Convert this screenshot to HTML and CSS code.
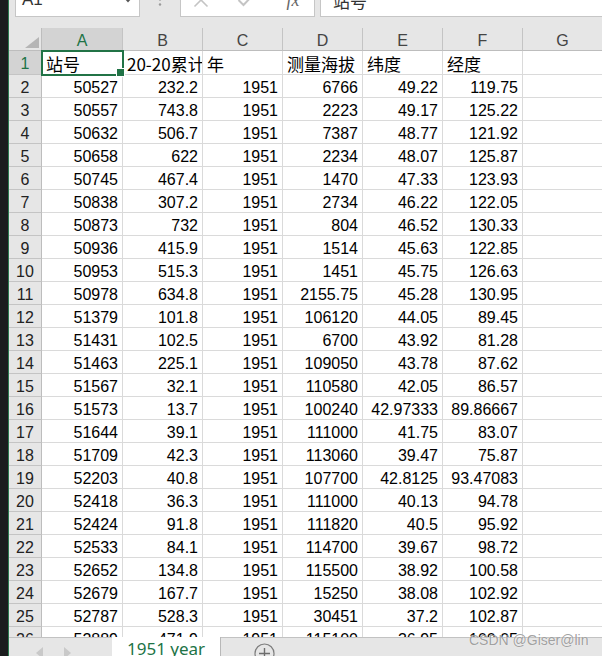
FILE: index.html
```html
<!DOCTYPE html>
<html lang="zh">
<head>
<meta charset="utf-8">
<title>Sheet</title>
<link rel="stylesheet" href="styles.css">
</head>
<body>
<div class="app">
  <div class="edge"></div>
  <div class="main">
    <div class="toolbar">
      <div class="bar">
        <div class="namebox"><span class="nametext">A1</span><svg class="ddarrow" width="8" height="5" viewBox="0 0 8 5"><polygon points="0,0 8,0 4,4.5" fill="#555"/></svg></div>
        <div class="dots"><svg width="4" height="14" viewBox="0 0 4 14"><circle cx="2" cy="1.5" r="1.2" fill="#9a9a9a"/><circle cx="2" cy="6.5" r="1.2" fill="#9a9a9a"/><circle cx="2" cy="11.5" r="1.2" fill="#9a9a9a"/></svg></div>
        <div class="fxbox">
          <div class="slot s1"><svg width="16" height="16" viewBox="0 0 16 16"><path d="M1.5 1.5 L14.5 14.5 M14.5 1.5 L1.5 14.5" stroke="#c4c4c4" stroke-width="1.6" fill="none"/></svg></div>
          <div class="slot s2"><svg width="18" height="14" viewBox="0 0 18 14"><path d="M1.5 7 L6.5 12 L16.5 1.5" stroke="#c4c4c4" stroke-width="2" fill="none"/></svg></div>
          <div class="slot s3"><span class="fx">fx</span></div>
        </div>
        <div class="formula"><span class="ftext">站号</span></div>
      </div>
    </div>

    <div class="sheet">
      <div class="corner"><svg width="14" height="11" viewBox="0 0 14 11"><polygon points="14,0 14,11 0,11" fill="#b5b5b5"/></svg></div>
      <div class="ch on">A</div><div class="ch">B</div><div class="ch">C</div><div class="ch">D</div><div class="ch">E</div><div class="ch">F</div><div class="ch g">G</div>

      <div class="rh on">1</div>
      <div class="c t cjk sel">站号</div><div class="c t cjk">20-20累计降水</div><div class="c t cjk">年</div><div class="c t cjk">测量海拔</div><div class="c t cjk">纬度</div><div class="c t cjk">经度</div><div class="c g"></div>

      <div class="rh">2</div><div class="c n">50527</div><div class="c n">232.2</div><div class="c n">1951</div><div class="c n">6766</div><div class="c n">49.22</div><div class="c n">119.75</div><div class="c g"></div>
      <div class="rh">3</div><div class="c n">50557</div><div class="c n">743.8</div><div class="c n">1951</div><div class="c n">2223</div><div class="c n">49.17</div><div class="c n">125.22</div><div class="c g"></div>
      <div class="rh">4</div><div class="c n">50632</div><div class="c n">506.7</div><div class="c n">1951</div><div class="c n">7387</div><div class="c n">48.77</div><div class="c n">121.92</div><div class="c g"></div>
      <div class="rh">5</div><div class="c n">50658</div><div class="c n">622</div><div class="c n">1951</div><div class="c n">2234</div><div class="c n">48.07</div><div class="c n">125.87</div><div class="c g"></div>
      <div class="rh">6</div><div class="c n">50745</div><div class="c n">467.4</div><div class="c n">1951</div><div class="c n">1470</div><div class="c n">47.33</div><div class="c n">123.93</div><div class="c g"></div>
      <div class="rh">7</div><div class="c n">50838</div><div class="c n">307.2</div><div class="c n">1951</div><div class="c n">2734</div><div class="c n">46.22</div><div class="c n">122.05</div><div class="c g"></div>
      <div class="rh">8</div><div class="c n">50873</div><div class="c n">732</div><div class="c n">1951</div><div class="c n">804</div><div class="c n">46.52</div><div class="c n">130.33</div><div class="c g"></div>
      <div class="rh">9</div><div class="c n">50936</div><div class="c n">415.9</div><div class="c n">1951</div><div class="c n">1514</div><div class="c n">45.63</div><div class="c n">122.85</div><div class="c g"></div>
      <div class="rh">10</div><div class="c n">50953</div><div class="c n">515.3</div><div class="c n">1951</div><div class="c n">1451</div><div class="c n">45.75</div><div class="c n">126.63</div><div class="c g"></div>
      <div class="rh">11</div><div class="c n">50978</div><div class="c n">634.8</div><div class="c n">1951</div><div class="c n">2155.75</div><div class="c n">45.28</div><div class="c n">130.95</div><div class="c g"></div>
      <div class="rh">12</div><div class="c n">51379</div><div class="c n">101.8</div><div class="c n">1951</div><div class="c n">106120</div><div class="c n">44.05</div><div class="c n">89.45</div><div class="c g"></div>
      <div class="rh">13</div><div class="c n">51431</div><div class="c n">102.5</div><div class="c n">1951</div><div class="c n">6700</div><div class="c n">43.92</div><div class="c n">81.28</div><div class="c g"></div>
      <div class="rh">14</div><div class="c n">51463</div><div class="c n">225.1</div><div class="c n">1951</div><div class="c n">109050</div><div class="c n">43.78</div><div class="c n">87.62</div><div class="c g"></div>
      <div class="rh">15</div><div class="c n">51567</div><div class="c n">32.1</div><div class="c n">1951</div><div class="c n">110580</div><div class="c n">42.05</div><div class="c n">86.57</div><div class="c g"></div>
      <div class="rh">16</div><div class="c n">51573</div><div class="c n">13.7</div><div class="c n">1951</div><div class="c n">100240</div><div class="c n">42.97333</div><div class="c n">89.86667</div><div class="c g"></div>
      <div class="rh">17</div><div class="c n">51644</div><div class="c n">39.1</div><div class="c n">1951</div><div class="c n">111000</div><div class="c n">41.75</div><div class="c n">83.07</div><div class="c g"></div>
      <div class="rh">18</div><div class="c n">51709</div><div class="c n">42.3</div><div class="c n">1951</div><div class="c n">113060</div><div class="c n">39.47</div><div class="c n">75.87</div><div class="c g"></div>
      <div class="rh">19</div><div class="c n">52203</div><div class="c n">40.8</div><div class="c n">1951</div><div class="c n">107700</div><div class="c n">42.8125</div><div class="c n">93.47083</div><div class="c g"></div>
      <div class="rh">20</div><div class="c n">52418</div><div class="c n">36.3</div><div class="c n">1951</div><div class="c n">111000</div><div class="c n">40.13</div><div class="c n">94.78</div><div class="c g"></div>
      <div class="rh">21</div><div class="c n">52424</div><div class="c n">91.8</div><div class="c n">1951</div><div class="c n">111820</div><div class="c n">40.5</div><div class="c n">95.92</div><div class="c g"></div>
      <div class="rh">22</div><div class="c n">52533</div><div class="c n">84.1</div><div class="c n">1951</div><div class="c n">114700</div><div class="c n">39.67</div><div class="c n">98.72</div><div class="c g"></div>
      <div class="rh">23</div><div class="c n">52652</div><div class="c n">134.8</div><div class="c n">1951</div><div class="c n">115500</div><div class="c n">38.92</div><div class="c n">100.58</div><div class="c g"></div>
      <div class="rh">24</div><div class="c n">52679</div><div class="c n">167.7</div><div class="c n">1951</div><div class="c n">15250</div><div class="c n">38.08</div><div class="c n">102.92</div><div class="c g"></div>
      <div class="rh">25</div><div class="c n">52787</div><div class="c n">528.3</div><div class="c n">1951</div><div class="c n">30451</div><div class="c n">37.2</div><div class="c n">102.87</div><div class="c g"></div>
      <div class="rh">26</div><div class="c n">52889</div><div class="c n">471.9</div><div class="c n">1951</div><div class="c n">115100</div><div class="c n">36.95</div><div class="c n">100.05</div><div class="c g"></div>
    </div>

    <div class="tabbar">
      <div class="nav">
        <svg class="arr al" width="7" height="12" viewBox="0 0 7 12"><polygon points="7,0 7,12 0,6" fill="#c9c9c9"/></svg>
        <svg class="arr ar" width="7" height="12" viewBox="0 0 7 12"><polygon points="0,0 0,12 7,6" fill="#c9c9c9"/></svg>
      </div>
      <div class="tab">1951 year</div>
      <div class="rest">
        <svg class="plus" width="21" height="21" viewBox="0 0 21 21"><circle cx="10.5" cy="10.5" r="9.5" stroke="#7d7d7d" stroke-width="1.2" fill="none"/><path d="M10.5 5 V16 M5 10.5 H16" stroke="#6d6d6d" stroke-width="1.4"/></svg>
      </div>
    </div>
  </div>
</div>
<div class="watermark">CSDN @Giser@lin</div>
</body>
</html>
```

FILE: styles.css
```css
* { box-sizing: border-box; }
html, body { margin: 0; padding: 0; }
body {
  width: 602px;
  height: 656px;
  overflow: hidden;
  position: relative;
  background: #e6e6e6;
  font-family: "Liberation Sans", Arial, sans-serif;
}
.app { display: flex; height: 656px; }
.edge {
  flex: none;
  width: 9px;
  background: #1b1d1e;
  border-right: 1px solid #2c7a50;
}
.main { flex: 1; min-width: 0; display: flex; flex-direction: column; }

/* formula bar */
.toolbar { flex: none; height: 28px; overflow: hidden; }
.bar { display: flex; align-items: flex-start; height: 34px; margin-top: -17px; }
.namebox {
  flex: none;
  margin-left: 6px;
  width: 125px;
  height: 34px;
  background: #fff;
  border: 1px solid #c6c6c6;
  display: flex;
  align-items: center;
  padding-left: 6px;
}
.nametext { font-size: 17px; color: #333; }
.ddarrow { margin-left: auto; margin-right: 7px; }
.dots { flex: none; width: 40px; height: 34px; display: flex; align-items: center; justify-content: center; }
.fxbox {
  flex: none;
  width: 135px;
  height: 34px;
  background: #fff;
  border: 1px solid #c6c6c6;
  display: flex;
}
.slot { height: 32px; display: flex; align-items: center; justify-content: center; }
.s1 { width: 39px; }
.s2 { width: 52px; }
.s3 { width: 42px; }
.fx { font-family: "Liberation Serif", "Times New Roman", serif; font-style: italic; font-size: 18px; color: #666; }
.formula {
  flex: 1;
  margin-left: 5px;
  height: 34px;
  background: #fff;
  border: 1px solid #c6c6c6;
  border-right: none;
  display: flex;
  align-items: center;
  padding-left: 12px;
}
.ftext { font-family: "Noto Sans CJK SC", sans-serif; font-size: 17px; color: #333; }

/* grid */
.sheet {
  flex: none;
  height: 609px;
  overflow: hidden;
  display: grid;
  grid-template-columns: 33px 81px 80px 80px 80px 80px 80px 1fr;
  grid-template-rows: 23px 24px;
  grid-auto-rows: 23px;
  background: #fff;
}
.corner {
  background: #e6e6e6;
  border-right: 1px solid #bdbdbd;
  border-bottom: 1px solid #bdbdbd;
  display: flex;
  justify-content: flex-end;
  align-items: flex-end;
  padding: 0 2px 2px 0;
}
.ch {
  background: #e6e6e6;
  border-right: 1px solid #c4c4c4;
  border-bottom: 1px solid #bdbdbd;
  text-align: center;
  font-size: 16px;
  line-height: 18px;
  padding-top: 4px;
  color: #444;
}
.ch.on { background: #d3d3d3; color: #217346; }
.ch.g { border-right: none; }
.rh {
  background: #e6e6e6;
  border-right: 1px solid #bdbdbd;
  border-bottom: 1px solid #c4c4c4;
  text-align: center;
  font-size: 16px;
  line-height: 18px;
  padding-top: 4px;
  color: #222;
}
.rh.on { background: #d3d3d3; color: #217346; }
.c {
  border-right: 1px solid #dadada;
  border-bottom: 1px solid #dadada;
  font-size: 16px;
  line-height: 18px;
  padding: 4px 4px 0 4px;
  white-space: nowrap;
  overflow: hidden;
  color: #000;
}
.c.g { border-right: none; }
.n { text-align: right; }
.t { text-align: left; }
.cjk { font-family: "Noto Sans CJK SC", sans-serif; font-size: 17px; padding-left: 4px; color: #000; }
.sel { position: relative; overflow: visible; z-index: 2; }
.sel::after {
  content: "";
  position: absolute;
  left: -1px;
  top: -1px;
  right: -2px;
  bottom: -2px;
  border: 2px solid #217346;
}
.sel::before {
  content: "";
  position: absolute;
  right: -3px;
  bottom: -3px;
  width: 7px;
  height: 7px;
  background: #217346;
  border: 1px solid #fff;
  z-index: 3;
}

/* sheet tabs */
.tabbar { flex: none; height: 19px; display: flex; overflow: hidden; }
.nav {
  flex: none;
  width: 103px;
  border-top: 1px solid #c2c2c2;
  display: flex;
  align-items: flex-start;
}
.arr { margin-top: 9px; }
.al { margin-left: 27px; }
.ar { margin-left: 21px; }
.tab {
  flex: none;
  width: 109px;
  height: 19px;
  background: #fff;
  border-right: 1px solid #b8b8b8;
  padding-left: 15px;
  font-family: "Noto Sans", "Liberation Sans", sans-serif;
  font-size: 17px;
  line-height: 23px;
  color: #217346;
  white-space: nowrap;
  overflow: hidden;
}
.rest { flex: 1; border-top: 1px solid #c2c2c2; }
.plus { display: block; margin: 5px 0 0 33px; }

.watermark {
  position: absolute;
  left: 469px;
  top: 632px;
  font-family: "Liberation Sans", Arial, sans-serif;
  font-size: 14px;
  color: rgba(110, 110, 110, 0.65);
  text-shadow: 0 0 1px rgba(255, 255, 255, 0.9);
  white-space: nowrap;
}
```
